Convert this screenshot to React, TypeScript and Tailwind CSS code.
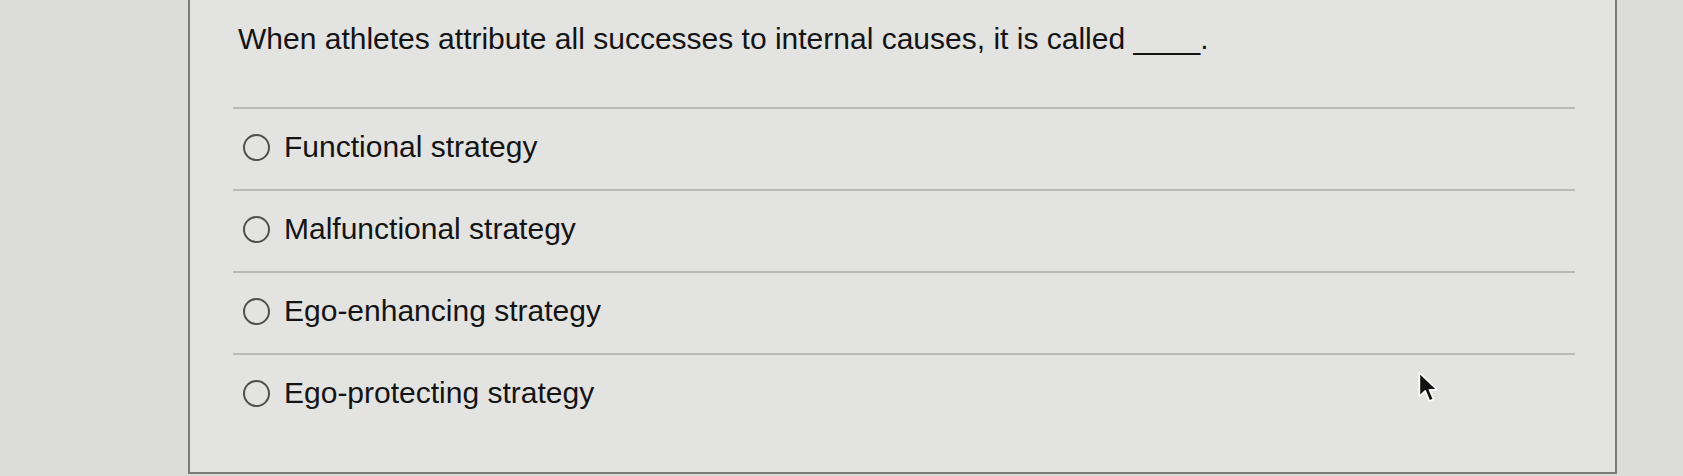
const options = [
  "Functional strategy",
  "Malfunctional strategy",
  "Ego-enhancing strategy",
  "Ego-protecting strategy",
];

function Cursor() {
  return (
    <svg
      className="absolute left-[1417px] top-[370px]"
      width="26"
      height="36"
      viewBox="0 0 22 30"
    >
      <path
        d="M2 2 L2 22 L7 17.5 L10.5 26 L14 24.5 L10.5 16.5 L17 16.5 Z"
        fill="#111"
        stroke="#fff"
        strokeWidth="1.4"
        strokeLinejoin="round"
      />
    </svg>
  );
}

export default function App() {
  return (
    <div
      className="relative h-[476px] w-full overflow-hidden bg-[#dcdcda] text-[#141414]"
      style={{ fontFamily: '"Liberation Sans", Arial, sans-serif' }}
    >
      <div className="ml-[188px] h-[474px] w-[1429px] border-x-2 border-b-2 border-[#7a7a7a] bg-[#e3e3e1]">
        <div className="ml-[43px] mr-[40px]">
          <div className="flex h-[107px] items-start pl-[5px] pt-[19px] text-[30px] leading-[40px]">
            When athletes attribute all successes to internal causes, it is called ____.
          </div>
          {options.map((opt) => (
            <div
              key={opt}
              className="flex h-[82px] items-center gap-[14px] border-t-2 border-[#b9b9b7] pb-[4px] pl-[10px]"
            >
              <span className="h-[27px] w-[27px] shrink-0 rounded-full border-2 border-[#505050]" />
              <span className="text-[30px] leading-none">{opt}</span>
            </div>
          ))}
        </div>
      </div>
      <Cursor />
    </div>
  );
}
